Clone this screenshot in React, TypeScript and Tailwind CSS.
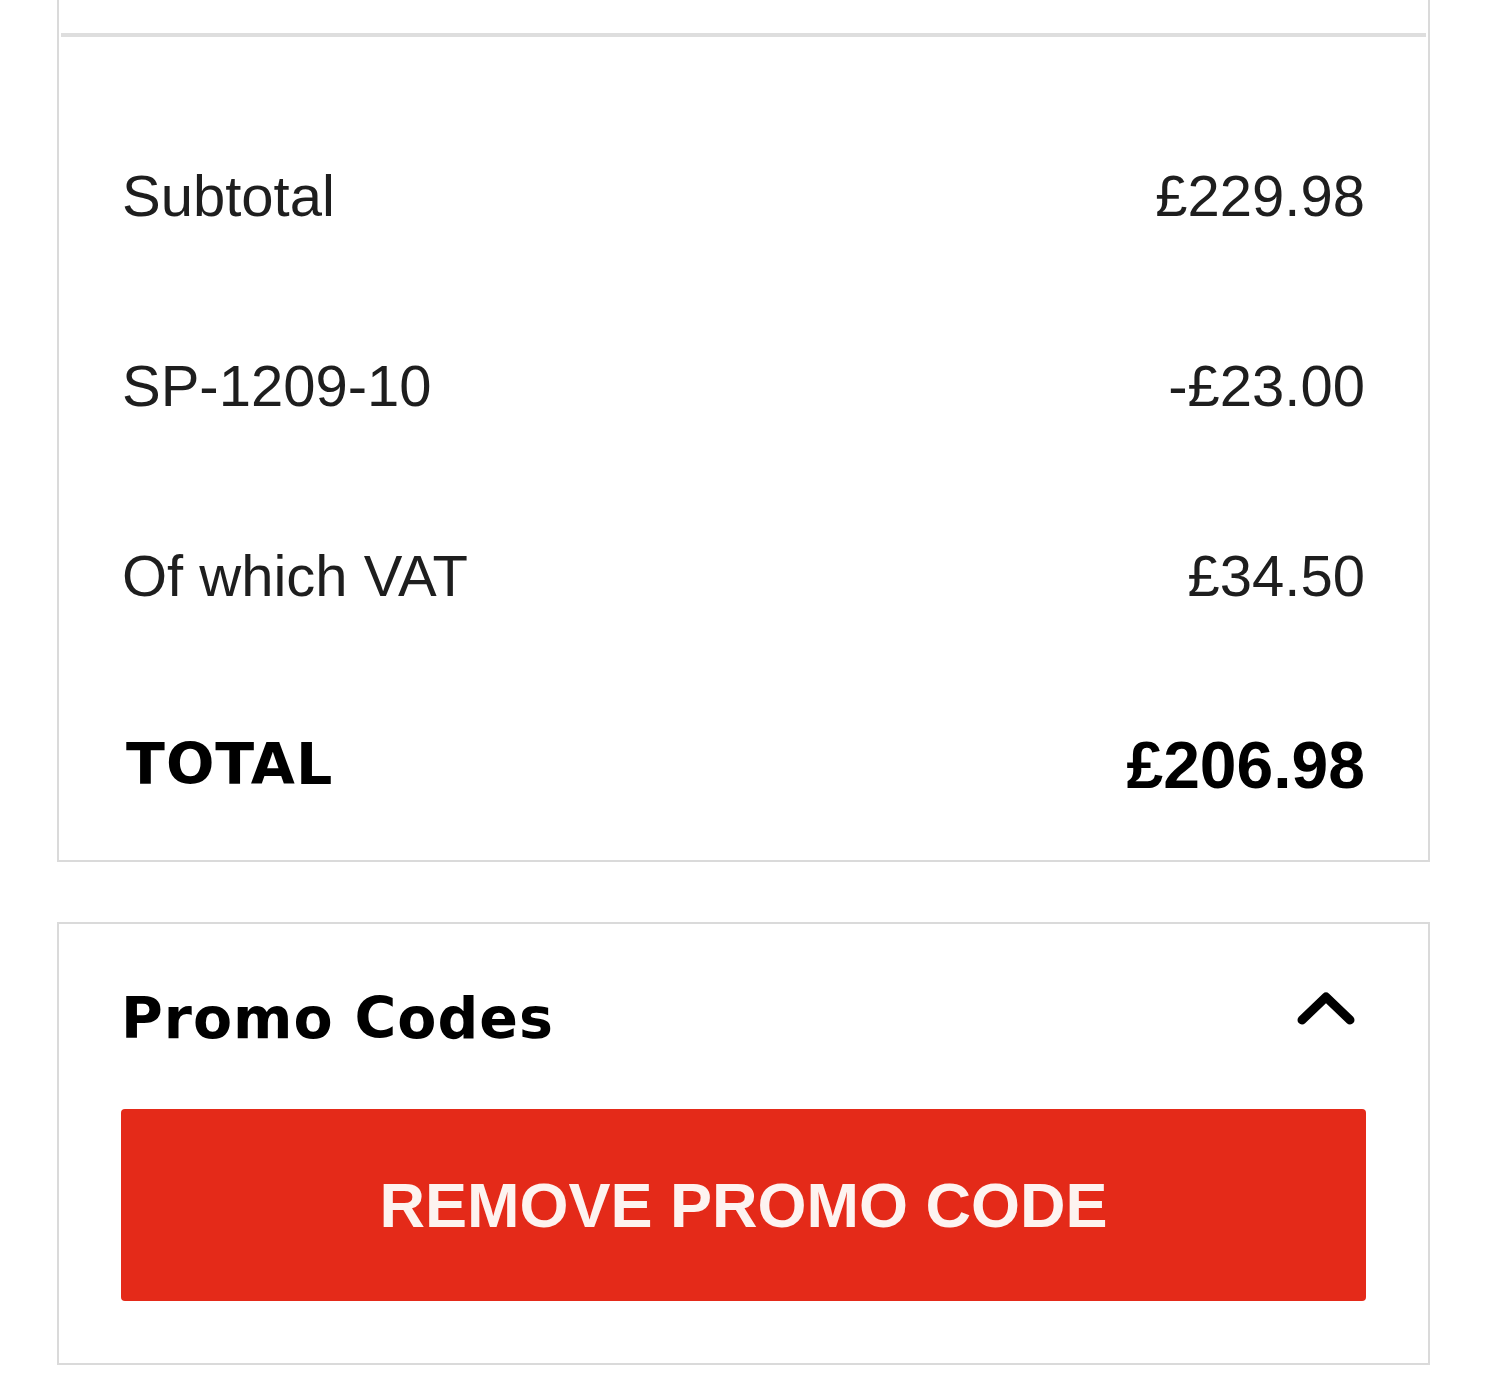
const rows = [
  { label: "Subtotal", value: "£229.98" },
  { label: "SP-1209-10", value: "-£23.00" },
  { label: "Of which VAT", value: "£34.50" },
];

const ChevronUp = () => (
  <svg width="60" height="36" viewBox="0 0 60 36" fill="none">
    <polyline
      points="6,30 30,7 54,30"
      stroke="#000"
      strokeWidth="9"
      strokeLinecap="round"
      strokeLinejoin="round"
    />
  </svg>
);

const App = () => {
  return (
    <div className="min-h-[1375px] bg-white font-['Liberation_Sans',Arial,sans-serif] text-[#1e1e1e]">
      <div className="ml-[57px] w-[1373px]">
        {/* order summary */}
        <div className="border-2 border-t-0 border-[#dadada]">
          <div className="h-[33px]" />
          <div className="mx-[2px] h-[4px] bg-[#dedede]" />
          <div className="px-[63px] pt-[63px]">
            {rows.map((row) => (
              <div
                key={row.label}
                className="flex h-[190px] items-center justify-between text-[58px]"
              >
                <span>{row.label}</span>
                <span>{row.value}</span>
              </div>
            ))}
            <div className="flex h-[190px] items-center justify-between font-bold text-black">
              <span className="ml-[4px] font-['DejaVu_Sans',sans-serif] text-[57px] tracking-[1px]">
                TOTAL
              </span>
              <span className="text-[66px]">£206.98</span>
            </div>
          </div>
        </div>

        {/* promo codes */}
        <div className="mt-[60px] border-2 border-[#dadada] px-[62px] pt-[65px] pb-[62px]">
          <div className="flex h-[60px] items-center justify-between">
            <span className="font-['DejaVu_Sans',sans-serif] text-[57px] font-bold tracking-[1px] text-black">
              Promo Codes
            </span>
            <span className="mr-[10px] -mt-[22px]">
              <ChevronUp />
            </span>
          </div>
          <button className="mt-[60px] flex h-[192px] w-full items-center justify-center rounded-[4px] bg-[#e42a19] text-[63px] font-bold text-[#fdf3f0]">
            REMOVE PROMO CODE
          </button>
        </div>
      </div>
    </div>
  );
};

export default App;
